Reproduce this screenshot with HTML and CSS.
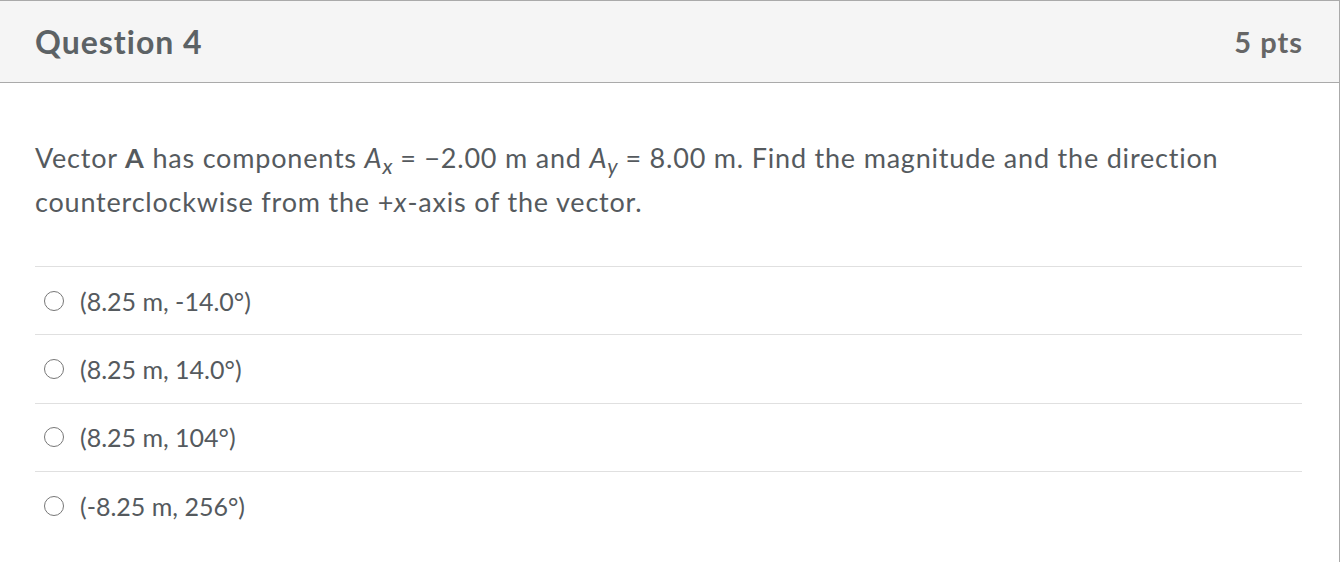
FILE: index.html
```html
<!DOCTYPE html>
<html>
<head>
<meta charset="utf-8">
<link rel="stylesheet" href="styles.css">
</head>
<body>
<div class="question">
  <div class="header">
    <span class="name">Question 4</span>
    <span class="pts">5 pts</span>
  </div>
  <div class="content">
    <div class="text">Vector <b>A</b> has components <i>A</i><sub><i>x</i></sub> = &minus;2.00 m and <i>A</i><sub><i>y</i></sub> = 8.00 m. Find the magnitude and the direction counterclockwise from the +<i>x</i>-axis of the vector.</div>
    <div class="answers">
      <label class="answer"><span class="radio"></span><span>(8.25 m, -14.0°)</span></label>
      <label class="answer"><span class="radio"></span><span>(8.25 m, 14.0°)</span></label>
      <label class="answer"><span class="radio"></span><span>(8.25 m, 104°)</span></label>
      <label class="answer"><span class="radio"></span><span>(-8.25 m, 256°)</span></label>
    </div>
  </div>
</div>
</body>
</html>
```

FILE: styles.css
```css
html, body {
  margin: 0;
  padding: 0;
  background: #fff;
}
body {
  font-family: Lato, "Open Sans", sans-serif;
  color: #555a5e;
  overflow: hidden;
}
.question {
  box-sizing: border-box;
  width: 1341px;
  margin-left: -1px;
  border: 1px solid #aaaaaa;
  border-bottom: none;
  height: 600px;
}
.header {
  box-sizing: border-box;
  height: 82px;
  background: #f5f5f5;
  border-bottom: 1px solid #aaaaaa;
  display: flex;
  align-items: center;
  justify-content: space-between;
  padding: 0 37px 0 35px;
}
.name {
  font-size: 32px;
  font-weight: bold;
  letter-spacing: 1px;
  color: #5c6265;
}
.pts {
  font-size: 29px;
  font-weight: bold;
  letter-spacing: 1px;
  margin-right: -1px;
  color: #666666;
}
.content {
  padding: 53px 37px 0 35px;
}
.text {
  font-size: 27px;
  letter-spacing: 0.8px;
  line-height: 44px;
  color: #555a5e;
}
.text b {
  font-weight: bold;
}
.text sub {
  font-size: 0.8em;
  vertical-align: -0.3em;
  line-height: 0;
  letter-spacing: 0;
}
.answers {
  margin-top: 42px;
}
.answer {
  display: flex;
  align-items: center;
  gap: 16px;
  height: 67.33px;
  border-top: 1px solid #e0e0e0;
  padding-left: 9px;
  font-size: 25px;
  color: #555a5e;
}
.radio {
  box-sizing: border-box;
  width: 20px;
  height: 20px;
  border: 1.5px solid #777;
  border-radius: 50%;
}
```
